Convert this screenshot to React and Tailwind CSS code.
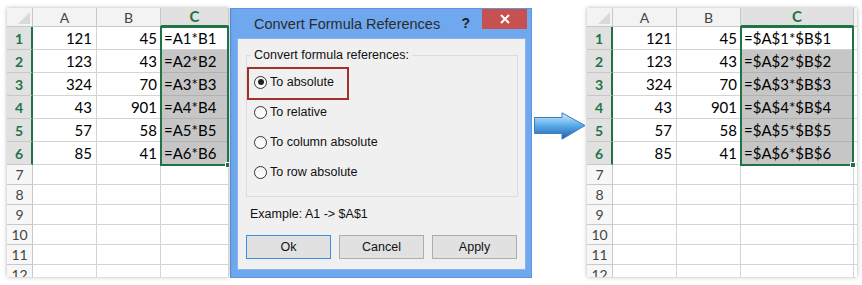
import React from "react";

const colA = [121, 123, 324, 43, 57, 85];
const colB = [45, 43, 70, 901, 58, 41];

const cellFont = { fontFamily: "Lato, 'Liberation Sans', sans-serif" };

const Sheet = ({ formulas, wide }) => {
  const rows = [1, 2, 3, 4, 5, 6, 7, 8, 9, 10, 11, 12];
  return (
    <div
      className={`relative shrink-0 overflow-hidden bg-white shadow-[0_0_4px_rgba(0,0,0,0.3)] ${wide ? "w-[270px]" : "w-[222px]"} h-[269px]`}
      style={cellFont}
    >
      <div
        className={`grid ${wide ? "grid-cols-[26px_64px_64px_113px_3px]" : "grid-cols-[26px_64px_64px_68px]"} grid-rows-[19px_repeat(6,23px)_repeat(6,20px)]`}
      >
        {/* header row */}
        <div className="relative bg-[#f3f3f3] border-r border-b border-[#c8c8c8]">
          <svg className="absolute right-[2px] bottom-[2px]" width="12" height="12" viewBox="0 0 12 12">
            <polygon points="12,0 12,12 0,12" fill="#d9d9d9" />
          </svg>
        </div>
        <div className="flex items-center justify-center bg-[#f3f3f3] border-r border-b border-[#c8c8c8] text-[14px] text-[#444]">A</div>
        <div className="flex items-center justify-center bg-[#f3f3f3] border-r border-b border-[#c8c8c8] text-[14px] text-[#444]">B</div>
        <div className="flex items-center justify-center bg-[#e1e1e1] border-r border-[#c8c8c8] border-b-2 border-b-[#217346] text-[15px] font-bold text-[#217346]">C</div>
        {wide ? <div className="bg-[#f3f3f3] border-b border-[#c8c8c8]" /> : null}

        {rows.map((r) => {
          const sel = r <= 6;
          return (
            <React.Fragment key={r}>
              {sel ? (
                <div className="flex items-center justify-center bg-[#e1e1e1] border-b border-[#c8c8c8] border-r-2 border-r-[#217346] text-[14px] font-bold text-[#217346]">
                  {r}
                </div>
              ) : (
                <div className="flex items-center justify-center bg-[#f7f7f7] border-r border-b border-[#c8c8c8] text-[14px] text-[#444]">
                  {r}
                </div>
              )}
              <div className="flex items-center justify-end pr-[4px] border-r border-b border-[#d4d4d4] text-[15px] text-black">
                {sel ? colA[r - 1] : ""}
              </div>
              <div className="flex items-center justify-end pr-[3px] border-r border-b border-[#d4d4d4] text-[15px] text-black">
                {sel ? colB[r - 1] : ""}
              </div>
              {sel ? (
                <div
                  className={`flex items-center pl-[3px] border-r border-b whitespace-nowrap text-[15px] text-black ${r === 1 ? "bg-white border-[#d4d4d4]" : "bg-[#c6c6c6] border-[#b2b2b2]"}`}
                >
                  {formulas[r - 1]}
                </div>
              ) : (
                <div className="border-r border-b border-[#d4d4d4]" />
              )}
              {wide ? <div className="border-b border-[#d4d4d4]" /> : null}
            </React.Fragment>
          );
        })}
      </div>

      {/* selection C1:C6 */}
      <div
        className={`absolute top-[18px] left-[153px] h-[140px] border-2 border-[#217346] ${wide ? "w-[114px]" : "w-[69px]"}`}
      >
        <div className="absolute -right-[4px] -bottom-[4px] w-[6px] h-[6px] bg-[#217346] border border-white" />
      </div>
    </div>
  );
};

const Radio = ({ checked, label }) => (
  <div className="flex items-center gap-[3px] h-[20px]">
    <div className="flex items-center justify-center w-[13px] h-[13px] rounded-full border border-[#333] bg-gradient-to-b from-[#f4f4f4] to-white">
      {checked ? <div className="w-[6px] h-[6px] rounded-full bg-[#222]" /> : null}
    </div>
    <span>{label}</span>
  </div>
);

const Dialog = () => (
  <div
    className="shrink-0 ml-[1px] w-[302px] h-[270px] bg-[#6fa8ef] border border-[#5d96de] flex flex-col text-[12.5px] text-[#111]"
    style={{ fontFamily: "'Liberation Sans', Arial, sans-serif" }}
  >
    <div className="h-[29px] flex items-start shrink-0">
      <div className="pl-[23px] pt-[5px] text-[14.5px] text-[#2c2c2c] flex-1">Convert Formula References</div>
      <div className="pt-[4px] pr-[12px] text-[14px] font-bold text-[#222]">?</div>
      <div className="mr-[4px] w-[45px] h-[20px] bg-[#c75050] flex items-center justify-center">
        <svg width="10" height="10" viewBox="0 0 10 10">
          <path d="M1 1 L9 9 M9 1 L1 9" stroke="white" strokeWidth="2" />
        </svg>
      </div>
    </div>
    <div className="ml-[6px] mr-[5px] mb-[7px] flex-1 bg-[#f0f0f0] border border-[#8bb3e6] flex flex-col">
      <div className="relative ml-[8px] mr-[7px] mt-[16px] h-[142px] border border-[#dcdcdc]">
        <div className="absolute -top-[9px] left-[4px] px-[3px] bg-[#f0f0f0] text-[#111] leading-[16px]">
          Convert formula references:
        </div>
        <div className="flex flex-col gap-[10px] pl-[7px] pt-[16px]">
          <Radio checked label="To absolute" />
          <Radio label="To relative" />
          <Radio label="To column absolute" />
          <Radio label="To row absolute" />
        </div>
        <div className="absolute top-[11px] left-[0px] w-[102px] h-[33px] border-2 border-[#a0302a]" />
      </div>
      <div className="ml-[12px] mt-[9px] leading-[16px]">Example: A1 -&gt; $A$1</div>
      <div className="flex gap-[8px] ml-[8px] mt-[13px]">
        <div className="w-[85px] h-[24px] flex items-center justify-center bg-[#e1e1e1] border border-[#3c8fe0]">Ok</div>
        <div className="w-[85px] h-[24px] flex items-center justify-center bg-[#e1e1e1] border border-[#adadad]">Cancel</div>
        <div className="w-[85px] h-[24px] flex items-center justify-center bg-[#e1e1e1] border border-[#adadad]">Apply</div>
      </div>
    </div>
  </div>
);

const Arrow = () => (
  <svg className="shrink-0 ml-[2px] mt-[104px]" width="52" height="28" viewBox="0 0 52 28">
    <defs>
      <linearGradient id="ag" x1="0" y1="0" x2="0" y2="1">
        <stop offset="0" stopColor="#d6eefc" />
        <stop offset="0.45" stopColor="#5fb0ec" />
        <stop offset="1" stopColor="#1c5ea8" />
      </linearGradient>
    </defs>
    <path d="M0.5 5.5 L28 5.5 L28 0.8 L51 13.5 L28 27.2 L28 21.5 L0.5 21.5 Z" fill="url(#ag)" stroke="#3a7cc2" strokeWidth="1" />
  </svg>
);

export default function App() {
  const before = ["=A1*B1", "=A2*B2", "=A3*B3", "=A4*B4", "=A5*B5", "=A6*B6"];
  const after = [
    "=$A$1*$B$1",
    "=$A$2*$B$2",
    "=$A$3*$B$3",
    "=$A$4*$B$4",
    "=$A$5*$B$5",
    "=$A$6*$B$6",
  ];
  return (
    <div className="w-[862px] h-[285px] bg-white overflow-hidden">
      <div className="flex items-start pt-[8px] pl-[7px]">
        <Sheet formulas={before} />
        <Dialog />
        <Arrow />
        <div className="ml-[1px]">
          <Sheet formulas={after} wide />
        </div>
      </div>
    </div>
  );
}
